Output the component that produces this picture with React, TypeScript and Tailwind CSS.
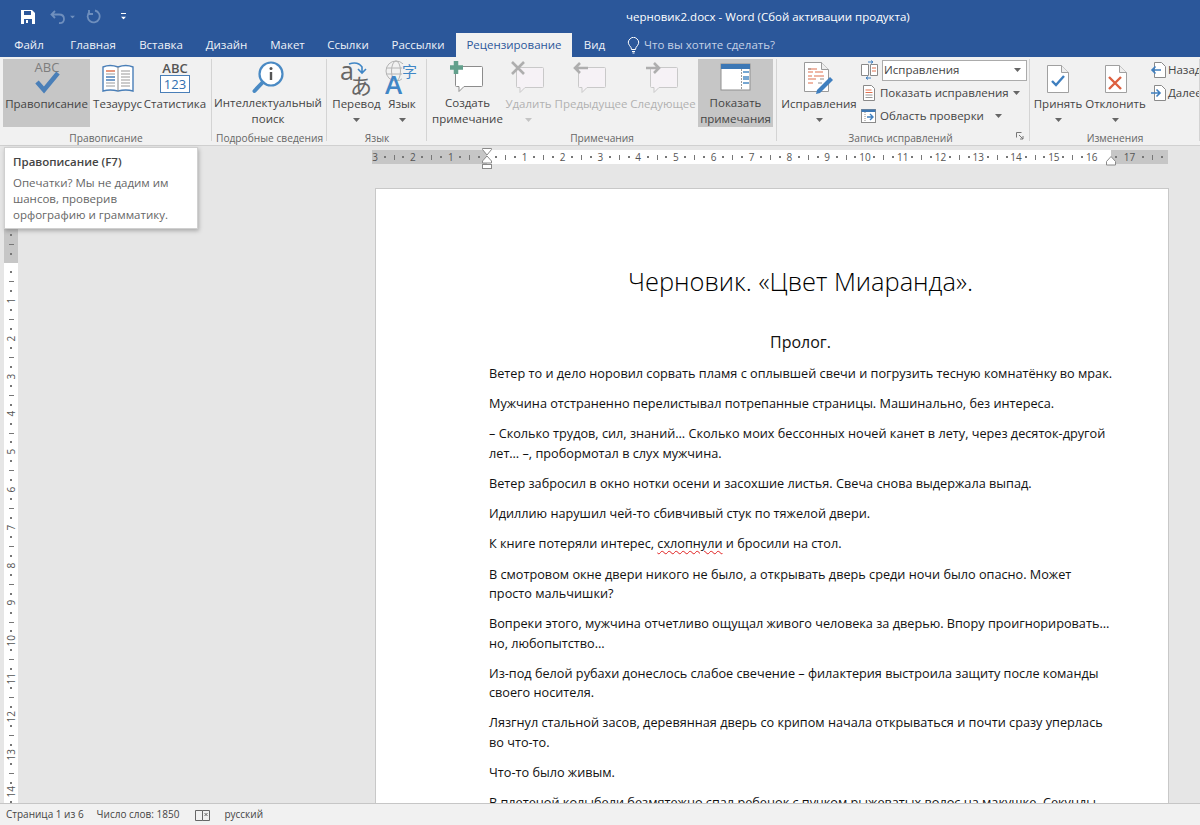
import React from 'react';

const Caret = ({ className = 'text-[#666]' }: { className?: string }) => (
  <svg width="7" height="4" viewBox="0 0 7 4" className={className}>
    <path d="M0 0h7L3.5 4z" fill="currentColor" />
  </svg>
);

const SpellIcon = () => (
  <svg width="40" height="36" viewBox="0 0 40 36">
    <text x="20" y="12" textAnchor="middle" fontFamily="Open Sans" fontSize="13" fill="#7d7d7d">ABC</text>
    <path d="M10 22l7 8L31 13" fill="none" stroke="#4a7fb8" strokeWidth="4.5" />
  </svg>
);

const BookIcon = () => (
  <svg width="34" height="32" viewBox="0 0 34 32">
    <path d="M2 5q7-3 15 0q8-3 15 0v24q-7-2-15 0q-8-2-15 0z" fill="#fff" stroke="#4a7fb8" strokeWidth="1.4" />
    <path d="M17 5v24" stroke="#8a8a8a" />
    <path d="M5 9h9" stroke="#d9603a" strokeWidth="1.3" />
    <path d="M5 12h9M5 21h9M5 24h9M20 9h9M20 12h9M20 15h9M20 18h9M20 21h9M20 24h9" stroke="#9a9a9a" strokeWidth="1.1" />
    <path d="M5 15h9M5 18h9" stroke="#4a7fb8" strokeWidth="1.3" />
  </svg>
);

const StatsIcon = () => (
  <svg width="34" height="34" viewBox="0 0 34 34">
    <text x="17" y="12" textAnchor="middle" fontFamily="Open Sans" fontSize="13" fontWeight="600" fill="#555">ABC</text>
    <rect x="2.5" y="14.5" width="29" height="17" fill="#fff" stroke="#4a7fb8" />
    <text x="17" y="28" textAnchor="middle" fontFamily="Open Sans" fontSize="13" fill="#2f6fb0">123</text>
  </svg>
);

const LookupIcon = () => (
  <svg width="34" height="34" viewBox="0 0 34 34">
    <circle cx="20" cy="14" r="11.5" fill="#fff" stroke="#4a8ac4" strokeWidth="2.2" />
    <path d="M11.5 22.5L3.5 31" stroke="#4a8ac4" strokeWidth="4" strokeLinecap="round" />
    <circle cx="20" cy="8.5" r="1.5" fill="#555" />
    <path d="M20 12v8" stroke="#555" strokeWidth="2.4" />
  </svg>
);

const TranslateIcon = () => (
  <svg width="36" height="36" viewBox="0 0 36 36">
    <text x="1" y="20" fontFamily="Open Sans" fontSize="25" fill="#666">a</text>
    <text x="11" y="34" fontFamily="Noto Sans CJK JP" fontSize="22" fill="#666">あ</text>
    <path d="M10 4q9-3 13 3l0 5M19 9l4 4l4-4" fill="none" stroke="#3f86c6" strokeWidth="1.6" />
  </svg>
);

const LanguageIcon = () => (
  <svg width="34" height="36" viewBox="0 0 34 36">
    <circle cx="11" cy="11" r="10" fill="none" stroke="#b4b4b4" />
    <ellipse cx="11" cy="11" rx="4.500" ry="10" fill="none" stroke="#b4b4b4" />
    <path d="M1 8h20M1 14h20" stroke="#b4b4b4" />
    <text x="0" y="34" fontFamily="Open Sans" fontSize="26" fontWeight="600" fill="#3f86c6">A</text>
    <rect x="17" y="4" width="15" height="15" fill="#f1f1f1" />
    <text x="17" y="17" fontFamily="Noto Sans CJK SC" fontSize="15" fill="#3f86c6">字</text>
  </svg>
);

const Bubble = ({ stroke = '#8c8c8c', fill = '#fff' }: { stroke?: string; fill?: string }) => (
  <path d="M5.5 5.5h26q1 0 1 1v18q0 1-1 1H14l-5 5v-5H6.5q-1 0-1-1z" fill={fill} stroke={stroke} strokeWidth="1" />
);

const NewCommentIcon = () => (
  <svg width="38" height="34" viewBox="0 0 38 34">
    <g transform="translate(1 1)"><Bubble /></g>
    <path d="M7 1v13M1 7.500h13" stroke="#62a08c" strokeWidth="4.5" />
  </svg>
);

const DeleteIcon = () => (
  <svg width="38" height="34" viewBox="0 0 38 34">
    <g transform="translate(1 1)"><Bubble stroke="#c9c9c9" fill="#f6f2f6" /></g>
    <path d="M2 1l12 12M14 1L2 13" stroke="#aeaeae" strokeWidth="2.6" />
  </svg>
);

const PrevIcon = () => (
  <svg width="38" height="34" viewBox="0 0 38 34">
    <g transform="translate(1 1)"><Bubble stroke="#c9c9c9" fill="#f6f2f6" /></g>
    <path d="M16 7H3M8 2L3 7l5 5" fill="none" stroke="#aeaeae" strokeWidth="2.6" />
  </svg>
);

const NextIcon = () => (
  <svg width="38" height="34" viewBox="0 0 38 34">
    <g transform="translate(1 1)"><Bubble stroke="#c9c9c9" fill="#f6f2f6" /></g>
    <path d="M2 7h13M10 2l5 5l-5 5" fill="none" stroke="#aeaeae" strokeWidth="2.6" />
  </svg>
);

const ShowCommentsIcon = () => (
  <svg width="32" height="28" viewBox="0 0 32 28">
    <rect x="1" y="1" width="29" height="26" fill="#fff" stroke="#8f8f8f" />
    <rect x="1" y="1" width="29" height="5" fill="#3d78b5" />
    <path d="M21.500 6v21" stroke="#9a9a9a" strokeDasharray="2 1" />
    <path d="M23 9h6M23 14h6M23 16h6M23 20h6" stroke="#4a8ac4" strokeWidth="1.5" />
  </svg>
);

const TrackIcon = () => (
  <svg width="34" height="34" viewBox="0 0 34 34">
    <path d="M2.500 1.500h17l7 7v22h-24z" fill="#fff" stroke="#9a9a9a" />
    <path d="M19.500 1.500v7h7" fill="#eee" stroke="#9a9a9a" />
    <path d="M6 8h9M6 11h5M13 11h8M6 15h4M12 15h10M6 18h8M6 22h5" stroke="#e0704f" strokeWidth="1.2" />
    <path d="M6 8h3M18 18h4M16 22h4" stroke="#8f8f8f" strokeWidth="1.2" />
    <path d="M15 29l13-13l3 3l-13 13l-4 1z" fill="#3f7fbf" />
  </svg>
);

const DocIcon = ({ children }: { children: React.ReactNode }) => (
  <svg width="24" height="32" viewBox="0 0 24 32">
    <path d="M1.500 3.500h14l7 7v20h-21z" fill="#fff" stroke="#a0a0a0" />
    <path d="M15.500 3.500v7h7" fill="#eee" stroke="#a0a0a0" />
    {children}
  </svg>
);

const SmallDocArrow = ({ back }: { back?: boolean }) => (
  <svg width="18" height="18" viewBox="0 0 18 18">
    <path d="M4.500 1.500h7l4 4v11h-11z" fill="#fff" stroke="#8a8a8a" />
    {back ? (
      <path d="M11 9H2M5.500 5.500L2 9l3.500 3.500" fill="none" stroke="#3f7fbf" strokeWidth="1.6" />
    ) : (
      <path d="M1 9h9M6.500 5.500L10 9l-3.500 3.500" fill="none" stroke="#3f7fbf" strokeWidth="1.6" />
    )}
  </svg>
);

const RibbonButton = ({ width, label, icon, caret, disabled, active }: {
  width: string;
  label: string[];
  icon: React.ReactNode;
  caret?: boolean;
  disabled?: boolean;
  active?: boolean;
}) => (
  <div className={`${width} h-[68px] shrink-0 flex flex-col items-center ${active ? 'bg-[#c6c6c6]' : ''} ${disabled ? 'text-[#b1b1b1]' : 'text-[#444]'}`}>
    <div className="h-[37px] w-full flex items-center justify-center">{icon}</div>
    {label.map(l => (
      <span key={l} className="leading-[16px] whitespace-nowrap">{l}</span>
    ))}
    {caret && <div className="h-[15px] flex items-center"><Caret className={disabled ? 'text-[#c4c4c4]' : 'text-[#666]'} /></div>}
  </div>
);

const Group = ({ width, label, gap = 'gap-[2px]', pad = 'pl-[3px]', children, launcher }: {
  width: string;
  label: string;
  gap?: string;
  pad?: string;
  children: React.ReactNode;
  launcher?: boolean;
}) => (
  <div className={`${width} shrink-0 flex flex-col relative after:absolute after:right-0 after:top-[2px] after:bottom-[4px] after:w-px after:bg-[#d4d4d4]`}>
    <div className={`flex ${gap} ${pad} pt-[2px] h-[74px]`}>{children}</div>
    <div className={`text-center text-[10.2px] leading-[14px] text-[#666] whitespace-nowrap ${launcher ? 'pr-[6px]' : ''}`}>{label}</div>
    {launcher && (
      <svg width="8" height="8" viewBox="0 0 8 8" className="absolute right-[6px] bottom-[5px]">
        <path d="M0.500 0.500h5M0.500 0.500v5M3 3l4 4M7 4v3H4" fill="none" stroke="#777" />
      </svg>
    )}
  </div>
);

const Dot = () => <span className="w-[2px] h-[2px] bg-[#777]" />;

const HCell = ({ n, numFirst }: { n: number; numFirst?: boolean }) => {
  const num = <span className="w-[9.45px] flex justify-center text-[10px]">{n}</span>;
  const slot = (el: React.ReactNode, key: string) => <span key={key} className="w-[9.45px] flex justify-center">{el}</span>;
  return (
    <div className="flex items-center w-[37.8px] shrink-0">
      {numFirst && num}
      {slot(<Dot />, 'a')}
      {slot(<span className="w-px h-[5px] bg-[#777]" />, 'b')}
      {slot(<Dot />, 'c')}
      {!numFirst && num}
    </div>
  );
};

const VCell = ({ n, numFirst }: { n: number; numFirst?: boolean }) => {
  const num = <span className="h-[9.45px] flex items-center justify-center text-[10px] -rotate-90">{n}</span>;
  const slot = (el: React.ReactNode, key: string) => <span key={key} className="h-[9.45px] flex items-center justify-center">{el}</span>;
  return (
    <div className="flex flex-col w-full h-[37.8px] shrink-0">
      {numFirst && num}
      {slot(<Dot />, 'a')}
      {slot(<span className="h-px w-[5px] bg-[#777]" />, 'b')}
      {slot(<Dot />, 'c')}
      {!numFirst && num}
    </div>
  );
};

const HorizontalRuler = () => (
  <div className="h-[14px] w-[796px] ml-[372px] mt-[4px] flex text-[#555] relative leading-none">
    <div className="w-[115px] bg-[#c6c6c6] flex justify-end pr-[3.2px]">
      {[3, 2, 1].map(n => <HCell key={n} n={n} numFirst />)}
    </div>
    <div className="w-[624px] bg-white flex pl-[4.7px] overflow-hidden">
      {Array.from({ length: 16 }, (_, i) => <HCell key={i} n={i + 1} />)}
    </div>
    <div className="w-[57px] bg-[#c6c6c6] flex items-center overflow-hidden">
      <span className="w-[9.45px] flex justify-center"><Dot /></span>
      <span className="w-[18px] flex justify-center text-[10px]">17</span>
      <span className="w-[9.45px] flex justify-center"><Dot /></span>
      <span className="w-[9.45px] flex justify-center"><span className="w-px h-[5px] bg-[#777]" /></span>
      <span className="w-[9.45px] flex justify-center"><Dot /></span>
    </div>
    <svg width="12" height="21" viewBox="0 0 12 21" className="absolute left-[109px] top-[-2px]">
      <path d="M1.500 0.500h9v1L6 7L1.500 1.500z" fill="#fff" stroke="#8a8a8a" />
      <path d="M6 8l4.500 5v2h-9v-2z" fill="#fff" stroke="#8a8a8a" />
      <rect x="1.500" y="16.500" width="9" height="4" fill="#fff" stroke="#8a8a8a" />
    </svg>
    <svg width="12" height="10" viewBox="0 0 12 10" className="absolute left-[733px] top-[6px]">
      <path d="M6 0.500l4.500 5v3.500h-9v-3.500z" fill="#fff" stroke="#8a8a8a" />
    </svg>
  </div>
);

const VerticalRuler = () => (
  <div className="w-[14px] ml-[4px] shrink-0 flex flex-col text-[#555] leading-none overflow-hidden">
    <div className="h-[75px] shrink-0 bg-[#c6c6c6] flex flex-col justify-end pb-[4.7px] overflow-hidden">
      <VCell n={1} numFirst />
    </div>
    <div className="flex-1 bg-white flex flex-col pt-[4.7px]">
      {Array.from({ length: 15 }, (_, i) => <VCell key={i} n={i + 1} />)}
    </div>
  </div>
);

// line breaks kept as in the document, the substitute font doesn't wrap the same way
const paragraphs: React.ReactNode[] = [
  'Ветер то и дело норовил сорвать пламя с оплывшей свечи и погрузить тесную комнатёнку во мрак.',
  'Мужчина отстраненно перелистывал потрепанные страницы. Машинально, без интереса.',
  '– Сколько трудов, сил, знаний… Сколько моих бессонных ночей канет в лету, через десяток-другой\nлет… –, пробормотал в слух мужчина.',
  'Ветер забросил в окно нотки осени и засохшие листья. Свеча снова выдержала выпад.',
  'Идиллию нарушил чей-то сбивчивый стук по тяжелой двери.',
  <>К книге потеряли интерес, <span className="underline decoration-wavy decoration-[#e02020] decoration-1 underline-offset-2">схлопнули</span> и бросили на стол.</>,
  'В смотровом окне двери никого не было, а открывать дверь среди ночи было опасно. Может\nпросто мальчишки?',
  'Вопреки этого, мужчина отчетливо ощущал живого человека за дверью. Впору проигнорировать…\nно, любопытство…',
  'Из-под белой рубахи донеслось слабое свечение – филактерия выстроила защиту после команды\nсвоего носителя.',
  'Лязгнул стальной засов, деревянная дверь со крипом начала открываться и почти сразу уперлась\nво что-то.',
  'Что-то было живым.',
  'В плетеной колыбели безмятежно спал ребенок с пучком рыжеватых волос на макушке. Секунды',
];

export default function App() {
  return (
    <div className="w-[1200px] h-[825px] flex flex-col overflow-hidden relative bg-[#e6e6e6] font-['Open_Sans',sans-serif] text-[11.5px]">
      {/* title bar */}
      <div className="h-[33px] shrink-0 bg-[#2b579a] flex items-center text-white">
        <div className="w-[626px] shrink-0 flex items-center pl-[20px]">
          <svg width="16" height="16" viewBox="0 0 16 16">
            <path d="M1 1h11l3 3v11H1z" fill="#fff" />
            <path d="M4 2h7v4H4z" fill="#2b579a" />
            <path d="M4 10h8v5H4z" fill="#2b579a" />
            <path d="M6 11h2v3H6z" fill="#fff" />
          </svg>
          <svg width="16" height="14" viewBox="0 0 16 14" className="ml-[14px]">
            <path d="M5 1L1.500 4.500 5 8M2 4.500h7q5 0 5 4.500t-5 4" fill="none" stroke="#6f8fbd" strokeWidth="1.8" />
          </svg>
          <Caret className="text-[#6f8fbd] ml-[3px] scale-75" />
          <svg width="15" height="15" viewBox="0 0 15 15" className="ml-[10px]">
            <path d="M9 1.500a6 6 0 1 1-5.500 1.500M3 1v4h4" fill="none" stroke="#6f8fbd" strokeWidth="1.8" />
          </svg>
          <div className="ml-[19px] flex flex-col items-center gap-[2px]">
            <span className="w-[5px] h-px bg-white" />
            <Caret className="text-white scale-75" />
          </div>
        </div>
        <span className="whitespace-nowrap">черновик2.docx - Word (Сбой активации продукта)</span>
      </div>

      {/* tabs */}
      <div className="h-[24px] shrink-0 bg-[#2b579a] flex items-center text-[#eef2f8]">
        <span className="w-[58px] text-center">Файл</span>
        <span className="w-[70px] text-center">Главная</span>
        <span className="w-[66px] text-center">Вставка</span>
        <span className="w-[65px] text-center">Дизайн</span>
        <span className="w-[57px] text-center">Макет</span>
        <span className="w-[64px] text-center">Ссылки</span>
        <span className="w-[76px] text-center">Рассылки</span>
        <span className="w-[116px] h-full bg-[#f1f1f1] text-[#2b579a] flex items-center justify-center">Рецензирование</span>
        <span className="w-[45px] text-center">Вид</span>
        <span className="ml-[10px] flex items-center gap-[4px] text-[#c5d2e6]">
          <svg width="13" height="17" viewBox="0 0 13 17">
            <path d="M4.500 12.500q0-2-2-4a5 5 0 1 1 8 0q-2 2-2 4zM5 14.500h3M5.500 16h2" fill="none" stroke="#fff" />
          </svg>
          Что вы хотите сделать?
        </span>
      </div>

      {/* ribbon */}
      <div className="h-[89px] shrink-0 bg-[#f1f1f1] border-b border-[#d0d0d0] flex text-[#444]">
        <Group width="w-[212px]" label="Правописание">
          <RibbonButton width="w-[87px]" label={['Правописание']} icon={<SpellIcon />} active />
          <RibbonButton width="w-[51px]" label={['Тезаурус']} icon={<BookIcon />} />
          <RibbonButton width="w-[60px]" label={['Статистика']} icon={<StatsIcon />} />
        </Group>
        <Group width="w-[115px]" label="Подробные сведения">
          <RibbonButton width="w-[106px]" label={['Интеллектуальный', 'поиск']} icon={<LookupIcon />} />
        </Group>
        <Group width="w-[100px]" label="Язык" gap="gap-[4px]" pad="pl-[5px]">
          <RibbonButton width="w-[49px]" label={['Перевод']} icon={<TranslateIcon />} caret />
          <RibbonButton width="w-[34px]" label={['Язык']} icon={<LanguageIcon />} caret />
        </Group>
        <Group width="w-[350px]" label="Примечания" pad="pl-[5px]">
          <RibbonButton width="w-[71px]" label={['Создать', 'примечание']} icon={<NewCommentIcon />} />
          <RibbonButton width="w-[47px]" label={['Удалить']} icon={<DeleteIcon />} caret disabled />
          <RibbonButton width="w-[74px]" label={['Предыдущее']} icon={<PrevIcon />} disabled />
          <RibbonButton width="w-[66px]" label={['Следующее']} icon={<NextIcon />} disabled />
          <RibbonButton width="w-[75px]" label={['Показать', 'примечания']} icon={<ShowCommentsIcon />} active />
        </Group>
        <Group width="w-[253px]" label="Запись исправлений" launcher pad="pl-[4px]">
          <RibbonButton width="w-[76px]" label={['Исправления']} icon={<TrackIcon />} caret />
          <div className="flex flex-col gap-[2px] ml-[1px]">
            <div className="flex items-center h-[22px] gap-[2px]">
              <svg width="20" height="20" viewBox="0 0 20 20">
                <path d="M1.500 4.500h7v11h-7zM10.500 4.500h7v11h-7z" fill="#fff" stroke="#8a8a8a" />
                <path d="M12 8h4M12 11h4" stroke="#e0704f" />
                <path d="M8 2h5M11 0.500l2 1.500-2 1.500M6 18h5M8 16.500L6 18l2 1.500" fill="none" stroke="#3f7fbf" />
              </svg>
              <div className="w-[145px] h-[21px] bg-white border border-[#ababab] flex items-center justify-between pl-[1px] pr-[5px]">
                Исправления
                <Caret />
              </div>
            </div>
            <div className="flex items-center h-[20px] gap-[4px] pl-[2px]">
              <svg width="14" height="16" viewBox="0 0 14 16">
                <path d="M1.500 0.500h8l3 3v12h-11z" fill="#fff" stroke="#8a8a8a" />
                <path d="M3.500 5h6M3.500 7.500h7" stroke="#e0704f" />
                <path d="M3.500 10h7M3.500 12.500h7" stroke="#9a9a9a" />
              </svg>
              <span className="whitespace-nowrap">Показать исправления</span>
              <Caret />
            </div>
            <div className="flex items-center h-[22px] gap-[3px] pl-[1px]">
              <svg width="16" height="14" viewBox="0 0 16 14">
                <rect x="0.500" y="0.500" width="14" height="13" fill="#fff" stroke="#8a8a8a" />
                <rect x="0.500" y="0.500" width="14" height="2.500" fill="#3d78b5" />
                <path d="M4 3v10" stroke="#8a8a8a" strokeDasharray="1 1" />
                <path d="M6 8h6M9 5l3 3-3 3" fill="none" stroke="#3f7fbf" strokeWidth="1.4" />
              </svg>
              <span className="whitespace-nowrap">Область проверки</span>
              <Caret className="text-[#666] ml-[8px]" />
            </div>
          </div>
        </Group>
        <Group width="w-[170px]" label="Изменения" gap="gap-[3px]" pad="pl-[4px]">
          <RibbonButton width="w-[48px]" label={['Принять']} caret icon={<DocIcon><path d="M6 19l4 4l8-9" fill="none" stroke="#3f7fbf" strokeWidth="2.4" /></DocIcon>} />
          <RibbonButton width="w-[61px]" label={['Отклонить']} caret icon={<DocIcon><path d="M5 15l12 12M17 15L5 27" fill="none" stroke="#dd6040" strokeWidth="2.4" /></DocIcon>} />
          <div className="flex flex-col gap-[3px] pt-[1px] ml-[1px]">
            <div className="flex items-center h-[20px]"><SmallDocArrow back />Назад</div>
            <div className="flex items-center h-[20px]"><SmallDocArrow />Далее</div>
          </div>
        </Group>
      </div>

      {/* document area */}
      <div className="flex-1 min-h-0 flex flex-col overflow-hidden">
        <div className="h-[42px] shrink-0">
          <HorizontalRuler />
        </div>
        <div className="flex-1 min-h-0 flex overflow-hidden">
          <VerticalRuler />
          <div className="ml-[357px] w-[794px] h-[800px] shrink-0 bg-white border border-[#c8c8c8] pt-[74px] pl-[113px] pr-[56px] text-[#111]">
            <h1 className="text-center text-[25.4px] font-light leading-[36px] text-black">Черновик. «Цвет Миаранда».</h1>
            <h2 className="text-center text-[16px] leading-[22px] mt-[32px] mb-[11px]">Пролог.</h2>
            {paragraphs.map((p, i) => (
              <p key={i} className="text-[12.7px] leading-[19.4px] mb-[10.8px] whitespace-pre">{p}</p>
            ))}
          </div>
        </div>
      </div>

      {/* status bar */}
      <div className="h-[22px] shrink-0 bg-[#f1f1f1] border-t border-[#c6c6c6] flex items-center pl-[6px] text-[10px] text-[#444]">
        <span>Страница 1 из 6</span>
        <span className="ml-[13px]">Число слов: 1850</span>
        <svg width="15" height="12" viewBox="0 0 15 12" className="ml-[16px]">
          <path d="M0.500 1.500h7v10h-7zM7.500 1.500h7v10h-7" fill="none" stroke="#666" />
          <path d="M9.500 4l3 3M12.500 4l-3 3" stroke="#666" />
        </svg>
        <span className="ml-[14px]">русский</span>
      </div>

      {/* spelling tooltip */}
      <div className="absolute left-[4px] top-[147px] w-[194px] h-[82px] bg-white border border-[#d0d0d0] shadow-[1px_2px_4px_rgba(0,0,0,0.25)] pl-[8px] pt-[6px] text-[#555]">
        <div className="font-semibold leading-[16px] text-[#444]">Правописание (F7)</div>
        <div className="mt-[5px] leading-[16px] text-[#666]">Опечатки? Мы не дадим им<br />шансов, проверив<br />орфографию и грамматику.</div>
      </div>
    </div>
  );
}
